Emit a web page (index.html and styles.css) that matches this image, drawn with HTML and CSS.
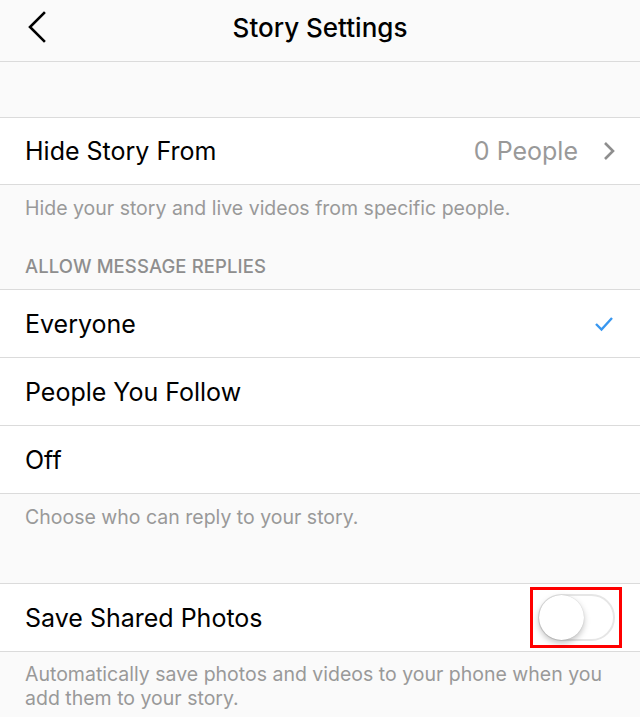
FILE: index.html
```html
<!DOCTYPE html>
<html>
<head>
<meta charset="utf-8">
<link rel="stylesheet" href="styles.css">
</head>
<body>
<div class="screen">
  <header class="topbar">
    <svg class="back" width="20" height="32" viewBox="0 0 20 32"><polyline points="16,2 2,16 16,30" fill="none" stroke="#000" stroke-width="2.6" stroke-linecap="square"/></svg>
    <h1 class="title">Story Settings</h1>
  </header>
  <div class="spacer"></div>
  <div class="group">
    <div class="row row-first">
      <span class="label">Hide Story From</span>
      <span class="value">0 People</span>
      <svg class="chev" width="12" height="20" viewBox="0 0 12 20"><polyline points="2,2 10,10 2,18" fill="none" stroke="#8e8e8e" stroke-width="2.6"/></svg>
    </div>
  </div>
  <p class="note">Hide your story and live videos from specific people.</p>
  <p class="section">ALLOW MESSAGE REPLIES</p>
  <div class="group">
    <div class="row">
      <span class="label">Everyone</span>
      <svg class="check" width="20" height="16" viewBox="0 0 20 16"><polyline points="2,8 7.5,13.5 18,2" fill="none" stroke="#3897f0" stroke-width="2.4"/></svg>
    </div>
    <div class="row"><span class="label">People You Follow</span></div>
    <div class="row"><span class="label">Off</span></div>
  </div>
  <p class="note note-tall">Choose who can reply to your story.</p>
  <div class="group">
    <div class="row">
      <span class="label">Save Shared Photos</span>
      <div class="highlight"><div class="toggle"><div class="knob"></div></div></div>
    </div>
  </div>
  <p class="note note-last">Automatically save photos and videos to your phone when you add them to your story.</p>
</div>
</body>
</html>
```
FILE: styles.css
```css
* { box-sizing: border-box; }
html, body { margin: 0; padding: 0; }
body {
  background: #fafafa;
  font-family: "Inter", "Roboto", sans-serif;
  color: #262626;
  width: 640px;
  height: 717px;
  overflow: hidden;
}
.screen { width: 640px; }
.topbar {
  height: 62px;
  padding-bottom: 7px;
  border-bottom: 1px solid #dbdbdb;
  display: flex;
  align-items: center;
  justify-content: center;
  position: relative;
  background: #fafafa;
}
.back { position: absolute; left: 28px; top: 11px; }
.title {
  margin: 0;
  font-size: 26px;
  font-weight: 500;
  color: #000;
  letter-spacing: 0;
}
.spacer { height: 56px; border-bottom: 1px solid #dbdbdb; }
.group { background: #fff; }
.row {
  height: 68px;
  border-bottom: 1px solid #dbdbdb;
  display: flex;
  align-items: center;
  padding: 0 26px 0 25px;
}
.row-first { height: 67px; }
.label { font-size: 25px; color: #000; flex: 1; }
.value { font-size: 25px; color: #999; margin-right: 25px; }
.chev { margin-right: -1px; }
.note {
  margin: 0;
  padding: 12px 25px 0;
  font-size: 19.5px;
  color: #999;
  height: 44px;
  line-height: 22px;
}
.section {
  margin: 0;
  padding: 27px 25px 0;
  height: 61px;
  font-size: 18.5px;
  color: #8e8e8e;
  font-weight: 500;
  letter-spacing: 0.1px;
  line-height: 20px;
  border-bottom: 1px solid #dbdbdb;
}
.note-tall { height: 90px; border-bottom: 1px solid #dbdbdb; }
.note-last { height: auto; line-height: 24px; padding-top: 10px; }
.highlight {
  border: 3px solid #ff0000;
  width: 92px;
  height: 61px;
  display: flex;
  align-items: center;
  justify-content: center;
  margin-right: -8px;
}
.toggle {
  width: 77px;
  height: 47px;
  border-radius: 24px;
  border: 2px solid #e6e6e6;
  background: #fff;
  position: relative;
}
.knob {
  position: absolute;
  left: -1px;
  top: -1px;
  width: 45px;
  height: 45px;
  border-radius: 50%;
  background: #fff;
  box-shadow: 0 3px 6px rgba(0,0,0,0.25), 0 0 1px rgba(0,0,0,0.2);
}
```
